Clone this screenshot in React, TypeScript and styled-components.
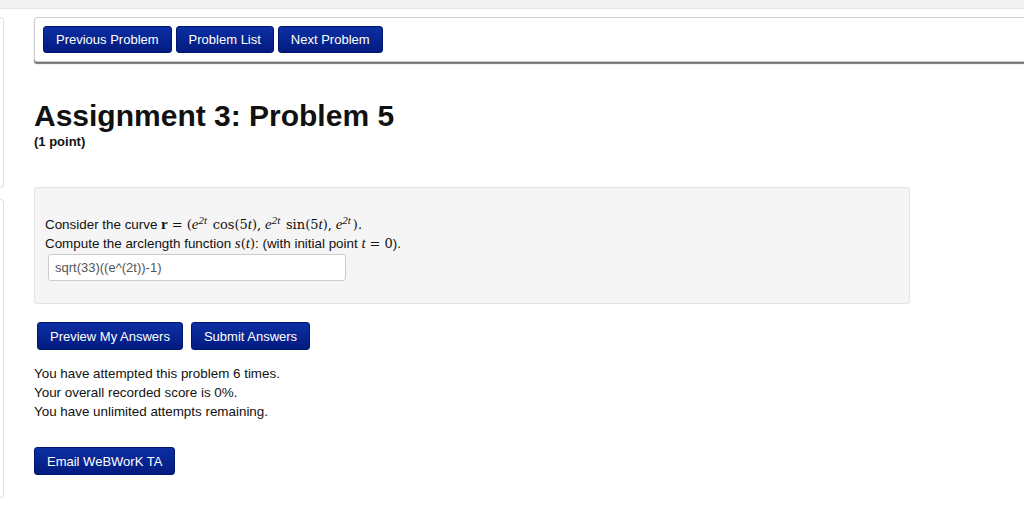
import { FC } from 'react'
import styled, { createGlobalStyle } from 'styled-components'

const GlobalStyle = createGlobalStyle`
  html, body {
    margin: 0;
    padding: 0;
    background: #fff;
    overflow: hidden;
  }
  body {
    font-family: 'Liberation Sans', Arial, Helvetica, sans-serif;
    font-size: 13.4px;
    color: #111;
  }
`

const TopStrip = styled.div`
  height: 8px;
  background: #f3f3f3;
  border-bottom: 1px solid #e6e6e6;
`

const Layout = styled.div`
  display: flex;
  padding-top: 8px;
`

const Sidebar = styled.aside`
  flex: 0 0 4px;
  display: flex;
  flex-direction: column;
  gap: 11px;
`

const SideBox = styled.div<{ $h: number }>`
  height: ${p => p.$h}px;
  border: 1px solid #e2e2e2;
  border-left: none;
  border-radius: 0 5px 5px 0;
`

const Main = styled.main`
  flex: 1;
  margin-left: 30px;
  min-width: 0;
`

const NavBar = styled.nav`
  display: flex;
  gap: 4px;
  padding: 8px;
  margin-right: -20px;
  border: 1px solid #cfcfcf;
  border-radius: 3px;
  box-shadow: 0 2px 1px rgba(0, 0, 0, 0.55);
  background: #fff;
`

const Button = styled.button`
  font-family: 'Liberation Sans', Arial, Helvetica, sans-serif;
  font-size: 13px;
  color: #fff;
  height: 28px;
  padding: 0 12px;
  border: 1px solid #021670;
  border-radius: 3px;
  background: linear-gradient(#0c2fa3, #021b80);
  cursor: pointer;
`

const NavButton = styled(Button)`
  height: 27px;
`

const Title = styled.h1`
  margin: 37px 0 0;
  font-size: 30px;
  line-height: 34px;
  font-weight: bold;
`

const Points = styled.div`
  font-size: 13px;
  font-weight: bold;
  line-height: 16px;
  margin-top: 1px;
`

const ProblemBox = styled.div`
  margin-top: 37px;
  width: 876px;
  box-sizing: border-box;
  padding: 27px 10px 22px;
  background: #f5f5f5;
  border: 1px solid #e3e3e3;
  border-radius: 3px;
`

const Line = styled.div`
  line-height: 19px;
  height: 19px;
`

const M = styled.span`
  font-family: 'DejaVu Serif', 'Liberation Serif', serif;
  font-size: 13px;
  line-height: 1;
`

const Mi = styled.i`
  font-family: 'Liberation Serif', serif;
  font-size: 15px;
  line-height: 1;
`

const Mb = styled.b`
  font-family: 'Liberation Serif', serif;
  font-size: 15px;
  line-height: 1;
`

const Op = styled.span`
  font-family: 'DejaVu Serif', 'Liberation Serif', serif;
  font-size: 13px;
  line-height: 1;
  margin: 0 4px;
`

const Sup = styled.sup`
  font-family: 'Liberation Serif', serif;
  font-style: italic;
  font-size: 11px;
  line-height: 0;
  margin-right: 2px;
`

const AnswerInput = styled.input`
  display: block;
  margin: 1px 0 0 3px;
  width: 298px;
  height: 27px;
  box-sizing: border-box;
  padding: 0 6px;
  font-family: 'Liberation Sans', Arial, sans-serif;
  font-size: 13px;
  color: #555;
  background: #fff;
  border: 1px solid #cccccc;
  border-radius: 3px;
`

const Actions = styled.div`
  display: flex;
  gap: 8px;
  margin: 18px 0 0 3px;
`

const Status = styled.div`
  margin-top: 14px;
  line-height: 19px;
`

const EmailRow = styled.div`
  margin-top: 26px;
`

const Exp: FC = () => (
  <>
    <Mi>e</Mi>
    <Sup>2t</Sup>
  </>
)

const App: FC = () => {
  return (
    <>
      <GlobalStyle />
      <TopStrip />
      <Layout>
        <Sidebar>
          <SideBox $h={169} />
          <SideBox $h={297} />
        </Sidebar>
        <Main>
          <NavBar>
            <NavButton>Previous Problem</NavButton>
            <NavButton>Problem List</NavButton>
            <NavButton>Next Problem</NavButton>
          </NavBar>
          <Title>Assignment 3: Problem 5</Title>
          <Points>(1 point)</Points>
          <ProblemBox>
            <Line>
              Consider the curve <Mb>r</Mb>
              <Op>=</Op>
              <M>(</M>
              <Exp /> <M>cos(5</M>
              <Mi>t</Mi>
              <M>),</M> <Exp /> <M>sin(5</M>
              <Mi>t</Mi>
              <M>),</M> <Exp />
              <M>).</M>
            </Line>
            <Line>
              Compute the arclength function <Mi>s</Mi>
              <M>(</M>
              <Mi>t</Mi>
              <M>)</M>: (with initial point <Mi>t</Mi>
              <Op>=</Op>
              <M>0</M>).
            </Line>
            <AnswerInput defaultValue="sqrt(33)((e^(2t))-1)" />
          </ProblemBox>
          <Actions>
            <Button>Preview My Answers</Button>
            <Button>Submit Answers</Button>
          </Actions>
          <Status>
            <div>You have attempted this problem 6 times.</div>
            <div>Your overall recorded score is 0%.</div>
            <div>You have unlimited attempts remaining.</div>
          </Status>
          <EmailRow>
            <Button>Email WeBWorK TA</Button>
          </EmailRow>
        </Main>
      </Layout>
    </>
  )
}

export default App
